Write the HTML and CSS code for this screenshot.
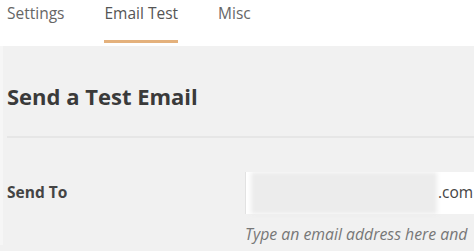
FILE: index.html
```html
<!DOCTYPE html>
<html lang="en">
<head>
    <meta charset="UTF-8">
    <title>Email Test</title>
    <link rel="stylesheet" href="styles.css">
</head>
<body>
    <div class="tabs">
        <a class="tab">Settings</a>
        <a class="tab active">Email Test</a>
        <a class="tab">Misc</a>
    </div>
    <div class="panel">
        <h2 class="panel-title">Send a Test Email</h2>
        <div class="form-row">
            <label class="form-label">Send To</label>
            <div class="form-field">
                <div class="email-input">
                    <span class="email-blur"></span>
                    <span class="email-end">.com</span>
                </div>
                <p class="description">Type an email address here and</p>
            </div>
        </div>
    </div>
</body>
</html>
```

FILE: styles.css
```css
html, body {
    margin: 0;
    padding: 0;
    background: #f1f1f1;
    font-family: "Open Sans", "Liberation Sans", sans-serif;
    overflow: hidden;
}
.tabs {
    background: #fff;
    height: 46px;
    display: flex;
    padding-left: 7px;
    gap: 40px;
}
.tab {
    font-size: 15.5px;
    color: #666;
    line-height: 26px;
    height: 43px;
    box-sizing: border-box;
    border-bottom: 3px solid transparent;
}
.tab.active {
    border-bottom-color: #e4b17c;
    color: #555;
}
.panel {
    border-left: 3px solid #f6f6f6;
    padding-left: 4px;
}
.panel-title {
    margin: 0;
    padding: 35px 0 25px 0;
    font-size: 22px;
    font-weight: bold;
    color: #3a3a3a;
    line-height: 30px;
    border-bottom: 2px solid #e6e6e6;
}
.form-row {
    display: flex;
    padding-top: 34px;
}
.form-label {
    flex-shrink: 0;
    width: 238px;
    font-size: 15.5px;
    font-weight: bold;
    color: #444;
    padding-top: 9px;
}
.form-field {
    flex: 1;
    white-space: nowrap;
    overflow: hidden;
}
.email-input {
    position: relative;
    width: 300px;
    height: 42px;
    background: #fff;
    border-left: 1px solid #e2e2e2;
    box-sizing: border-box;
}
.email-blur {
    position: absolute;
    left: 5px;
    top: 0;
    width: 186px;
    height: 42px;
    background: #ececec;
    filter: blur(2px);
}
.email-end {
    position: absolute;
    left: 192px;
    top: 9px;
    font-size: 15.5px;
    color: #444;
}
.description {
    margin: 9px 0 0 0;
    font-size: 15.8px;
    font-style: italic;
    color: #777;
}
```
